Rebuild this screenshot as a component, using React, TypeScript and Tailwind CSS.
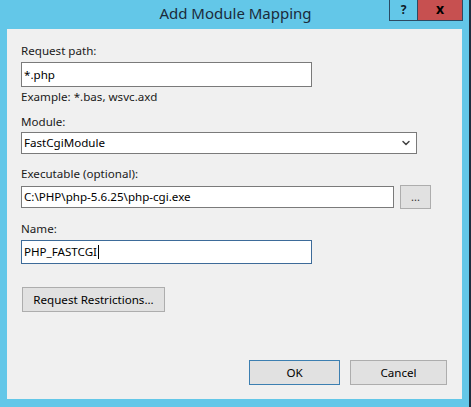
import { ChevronDown } from 'lucide-react'

const font = { fontFamily: '"Noto Sans", "Open Sans", sans-serif' }

function Label({ text, className }: { text: string; className?: string }) {
  return <div className={`text-[11.6px] leading-4 text-[#1a1a1a] ${className ?? ''}`}>{text}</div>
}

function Field({ value, className, focused }: { value: string; className: string; focused?: boolean }) {
  return (
    <div
      className={`flex items-center bg-white px-[2px] text-[11.6px] text-black border ${
        focused ? 'border-[#3d6b99]' : 'border-[#7a7a7a]'
      } ${className}`}
    >
      {value}
      {focused && <span className="ml-[1px] inline-block w-px h-[14px] bg-black" />}
    </div>
  )
}

export default function App() {
  return (
    <div className="flex w-[471px] h-[407px] bg-[#63c7e8]" style={font}>
      <div className="flex flex-col w-[469px] h-full">
        {/* title bar */}
        <div className="flex h-[29px] shrink-0">
          <div className="w-[82px]" />
          <div className="flex-1 flex items-center justify-center pb-[2px] text-[15px] text-[#1b2b3b]">
            Add Module Mapping
          </div>
          <div className="flex items-start h-[21px] mr-[6px]">
            <div className="w-[29px] h-[21px] flex items-center justify-center border border-[#2b4a63] border-t-0 text-[12px] font-bold text-[#0d1a26]">
              ?
            </div>
            <div className="w-[45px] h-[21px] flex items-center justify-center bg-[#c75050] border border-[#2b4a63] border-t-0 border-l-0 text-[14px] font-bold text-black leading-none pb-[2px]">
              x
            </div>
          </div>
        </div>

        {/* client area */}
        <div className="ml-[7px] w-[455px] h-[370px] bg-[#f0f0f0] pl-[14px] flex flex-col">
          <Label text="Request path:" className="mt-[14px]" />
          <Field value="*.php" className="mt-[3px] w-[291px] h-[25px]" />
          <Label text="Example: *.bas, wsvc.axd" className="mt-[2px]" />
          <Label text="Module:" className="mt-[9px]" />
          <div className="mt-[2px] w-[396px] h-[22px] flex items-center justify-between bg-white border border-[#7a7a7a] px-[2px] text-[11.6px] text-black">
            FastCgiModule
            <ChevronDown size={12} strokeWidth={3} className="text-[#444] mr-[2px]" />
          </div>
          <Label text="Executable (optional):" className="mt-[12px]" />
          <div className="mt-[3px] flex items-center h-[24px] gap-[6px]">
            <Field value="C:\PHP\php-5.6.25\php-cgi.exe" className="w-[373px] h-[22px]" />
            <button className="w-[31px] h-[24px] bg-[#e1e1e1] border border-[#adadad] text-[11px] text-[#333] leading-none pb-[2px]">
              ...
            </button>
          </div>
          <Label text="Name:" className="mt-[12px]" />
          <Field value="PHP_FASTCGI" focused className="mt-[3px] w-[291px] h-[24px]" />
          <button className="mt-[23px] ml-[1px] w-[143px] h-[25px] bg-[#e1e1e1] border border-[#adadad] text-[11.6px] text-black">
            Request Restrictions...
          </button>
          <div className="mt-[48px] flex justify-end gap-[10px] pr-[15px]">
            <button className="w-[91px] h-[25px] bg-[#e1e1e1] border border-[#3c7fb1] text-[11.6px] text-black">
              OK
            </button>
            <button className="w-[97px] h-[25px] bg-[#e1e1e1] border border-[#adadad] text-[11.6px] text-black">
              Cancel
            </button>
          </div>
        </div>
      </div>
      <div className="w-[2px] h-full bg-[#1d2f3f]" />
    </div>
  )
}
